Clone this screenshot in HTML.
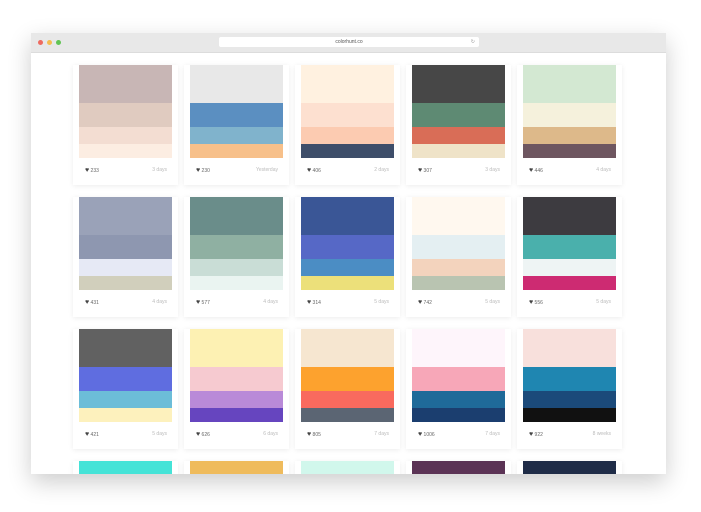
<!DOCTYPE html><html style="overflow:hidden"><head><style>
body{margin:0;width:701px;height:512px;background:#fff;position:relative;overflow:hidden;font-family:"Liberation Sans",sans-serif}
.win{position:absolute;left:31px;top:33px;width:635px;height:441px;background:#fff;box-shadow:0 8px 22px rgba(0,0,0,.2);overflow:hidden}
.bar{position:absolute;left:0;top:0;width:635px;height:19px;background:#e8e8e8;border-bottom:1px solid #dcdcdc}
.dot{position:absolute;top:7px;width:5px;height:5px;border-radius:50%}
.addr{position:absolute;left:188px;top:4px;width:260px;height:10px;background:#fff;border-radius:2px;font-size:5px;color:#555;text-align:center;line-height:10px}
.card{position:absolute;width:105px;height:120px;background:#fff;box-shadow:0 1px 5px rgba(0,0,0,.08)}
.pal{position:absolute;left:6px;top:0;width:93px;height:93px;overflow:hidden}
.pal div{width:100%}
.ft{position:absolute;left:12px;top:102px;width:82px;font-size:5px;color:#666}
.ft b{color:#444;font-size:7px}
.ft span{float:right;color:#bbb}
</style></head><body>
<div class="win">
<div class="bar"><div class="dot" style="left:7px;background:#ee6a5f"></div><div class="dot" style="left:16px;background:#f5bd4f"></div><div class="dot" style="left:25px;background:#61c454"></div><div class="addr">colorhunt.co<span style="position:absolute;right:4px;color:#999">↻</span></div></div>
</div>
<script>
var P=[
["#c8b6b5","#e0cbc0","#f3ddd2","#fcede2"],["#e8e8e8","#5b8fc1","#80b3cc","#f7c08a"],["#fff1e0","#fde0d0","#fccbb1","#3e4e6a"],["#474747","#5e8a73","#d96d57","#efe3c8"],["#d3e8d2","#f5f1dc","#ddb98a","#6e5660"],
["#9aa2b8","#8e97b0","#e6e9f5","#d1cfbc"],["#6a8d8a","#8fb0a2","#c9ddd6","#eaf4f1"],["#3a5696","#5668c6","#4b8dc4","#ece07a"],["#fff8ef","#e4eff2","#f3d3bd","#b9c4b1"],["#3d3b40","#4ab0ac","#eef4f4","#cd2b72"],
["#616161","#5f6de0","#6cbdd8","#fdf1bd"],["#fdf1b3","#f6cad0","#b98ad8","#6645bf"],["#f6e6d0","#fda22e","#f96a5e","#5b6573"],["#fef5fb","#f7a7b8","#1f6a99","#1b3e6f"],["#f8e0dc","#1f86b1","#1b4a7a","#111111"],
["#45e3d7","#45e3d7","#45e3d7","#45e3d7"],["#efbb5c","#efbb5c","#efbb5c","#efbb5c"],["#d1f7ec","#d1f7ec","#d1f7ec","#d1f7ec"],["#5b3355","#5b3355","#5b3355","#5b3355"],["#1f2c47","#1f2c47","#1f2c47","#1f2c47"]];
var L=["233","230","406","307","446","431","577","314","742","556","421","626","805","1006","922","","","","",""];
var D=["3 days","Yesterday","2 days","3 days","4 days","4 days","4 days","5 days","5 days","5 days","5 days","6 days","7 days","7 days","8 weeks","","","","",""];
var h="",H=[38,24,17,14];
for(var i=0;i<20;i++){var r=Math.floor(i/5),c=i%5,x=42+c*111,y=32+r*132;
h+='<div class="card" style="left:'+x+'px;top:'+y+'px"><div class="pal">';
for(var k=0;k<4;k++)h+='<div style="height:'+H[k]+'px;background:'+P[i][k]+'"></div>';
h+='</div>'+(L[i]?'<div class="ft"><b>♥</b> '+L[i]+'<span>'+D[i]+'</span></div>':'')+'</div>';}
document.querySelector('.win').innerHTML+=h;
</script>
</body></html>
